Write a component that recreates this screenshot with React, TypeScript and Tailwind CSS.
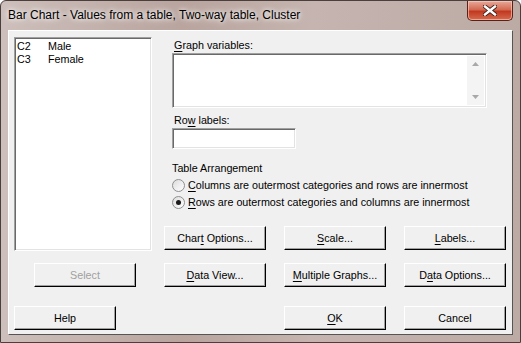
import React from 'react';

const Btn = ({
  children,
  disabled = false,
  className = '',
}: {
  children: React.ReactNode;
  disabled?: boolean;
  className?: string;
}) => (
  <div
    className={`h-[24px] w-[102px] flex items-center justify-center bg-[#f0f0f0] border border-t-white border-l-white border-r-black border-b-black shadow-[inset_-1px_-1px_0_#a0a0a0] leading-[13px] ${
      disabled ? 'text-[#a0a0a0]' : 'text-black'
    } ${className}`}
  >
    <span>{children}</span>
  </div>
);

const U = ({ children }: { children: React.ReactNode }) => (
  <span className="underline decoration-1 underline-offset-[2px]">{children}</span>
);

const Radio = ({ checked = false }: { checked?: boolean }) => (
  <div className="w-[13px] h-[13px] rounded-full border border-[#8e8f8f] bg-[linear-gradient(135deg,#dcdcdc,#ffffff)] flex items-center justify-center shrink-0">
    {checked && <div className="w-[5px] h-[5px] rounded-full bg-[#1a1a1a]" />}
  </div>
);

const sunken =
  'bg-white border border-t-[#a0a0a0] border-l-[#a0a0a0] border-r-white border-b-white shadow-[inset_1px_1px_0_#696969,inset_-1px_-1px_0_#e3e3e3]';

const App = () => {
  const columns = [
    { id: 'C2', name: 'Male' },
    { id: 'C3', name: 'Female' },
  ];

  return (
    <div className="w-[521px] h-[343px] flex flex-col border border-[#4a3f3c] rounded-t-[6px] bg-[linear-gradient(90deg,#cdbfbb,#b9a49e_35%,#c5b4af_60%,#bcaaa5)] font-['Liberation_Sans',Arial,sans-serif] text-[10.75px] text-black overflow-hidden">
      {/* Title bar */}
      <div className="h-[29px] flex items-start">
        <div className="flex-1 pl-[7px] pt-[7px] text-[12px] leading-[14px] text-black [text-shadow:0_0_8px_#ffffff,0_0_4px_#ffffff]">
          Bar Chart - Values from a table, Two-way table, Cluster
        </div>
        <div className="mr-[7px] w-[46px] h-[20px] rounded-b-[5px] border border-t-0 border-[#5a2118] bg-[linear-gradient(180deg,#e9a899,#d26a52_45%,#c2391f_55%,#d56b4f)] shadow-[inset_0_0_0_1px_rgba(255,210,200,0.6)] flex items-center justify-center">
          <svg width="14" height="11" viewBox="0 0 14 11">
            <path d="M2 1.5 L12 9.5 M12 1.5 L2 9.5" stroke="#3b1f1b" strokeWidth="4.2" strokeLinecap="square" />
            <path d="M2 1.5 L12 9.5 M12 1.5 L2 9.5" stroke="#ffffff" strokeWidth="2.4" strokeLinecap="square" />
          </svg>
        </div>
      </div>

      {/* Frame + client */}
      <div className="flex-1 flex px-[7px] pb-[7px]">
        <div className="w-[505px] h-[305px] bg-[#f0f0f0] border border-t-white border-l-white border-r-[#555555] border-b-[#555555] flex items-start pl-[5px] pt-[6px]">
          {/* Left column */}
          <div className="w-[138px] flex flex-col">
            <div className={`h-[214px] ${sunken} pl-[2px] pt-[2px]`}>
              {columns.map((c) => (
                <div key={c.id} className="flex leading-[13px]">
                  <span className="w-[31px]">{c.id}</span>
                  <span>{c.name}</span>
                </div>
              ))}
            </div>
            <Btn disabled className="ml-[20px] mt-[12px]">
              Select
            </Btn>
            <Btn className="mt-[19px]">Help</Btn>
          </div>

          {/* Right column */}
          <div className="ml-[12px] w-[342px] flex flex-col pt-[2px]">
            <div className="pl-[10px] leading-[13px]">
              <U>G</U>raph variables:
            </div>
            <div className={`ml-[8px] mt-[1px] w-[315px] h-[55px] ${sunken} flex justify-end p-[2px]`}>
              <div className="w-[17px] h-full bg-[#f4f4f4] flex flex-col items-center justify-between py-[6px]">
                <svg width="7" height="4" viewBox="0 0 7 4">
                  <path d="M0 4 L3.5 0 L7 4 Z" fill="#a8a8a8" />
                </svg>
                <svg width="7" height="4" viewBox="0 0 7 4">
                  <path d="M0 0 L3.5 4 L7 0 Z" fill="#a8a8a8" />
                </svg>
              </div>
            </div>

            <div className="pl-[10px] mt-[6px] leading-[13px]">
              Ro<U>w</U> labels:
            </div>
            <div className={`ml-[8px] mt-[1px] w-[124px] h-[21px] ${sunken}`} />

            <div className="pl-[8px] mt-[13px] leading-[13px]">Table Arrangement</div>
            <div className="pl-[8px] mt-[4px] flex items-center gap-[3px] leading-[13px]">
              <Radio />
              <span>
                <U>C</U>olumns are outermost categories and rows are innermost
              </span>
            </div>
            <div className="pl-[8px] mt-[4px] flex items-center gap-[3px] leading-[13px]">
              <Radio checked />
              <span>
                <U>R</U>ows are outermost categories and columns are innermost
              </span>
            </div>

            <div className="mt-[17px] grid grid-cols-3 gap-x-[18px]">
              <Btn>
                Char<U>t</U> Options...
              </Btn>
              <Btn>
                <U>S</U>cale...
              </Btn>
              <Btn>
                <U>L</U>abels...
              </Btn>
            </div>
            <div className="mt-[13px] grid grid-cols-3 gap-x-[18px]">
              <Btn>
                <U>D</U>ata View...
              </Btn>
              <Btn>
                <U>M</U>ultiple Graphs...
              </Btn>
              <Btn>
                D<U>a</U>ta Options...
              </Btn>
            </div>
            <div className="mt-[19px] grid grid-cols-3 gap-x-[18px]">
              <Btn className="col-start-2">
                <U>O</U>K
              </Btn>
              <Btn>Cancel</Btn>
            </div>
          </div>
        </div>
      </div>
    </div>
  );
};

export default App;
